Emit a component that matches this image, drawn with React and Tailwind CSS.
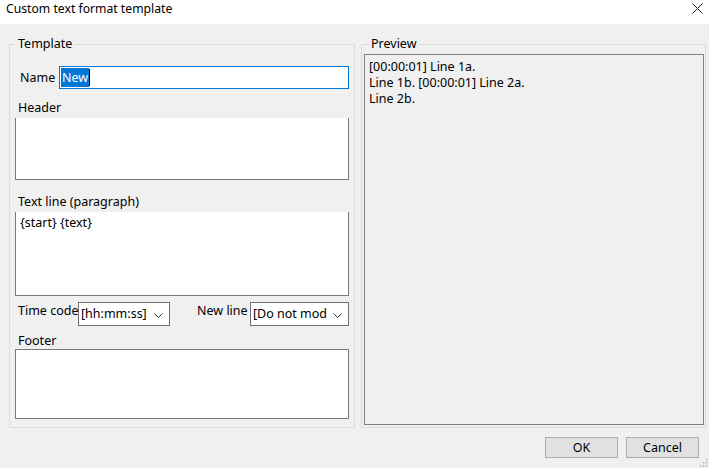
import React from 'react';

const font = { fontFamily: '"Noto Sans", "Liberation Sans", sans-serif' };

function Chevron() {
  return (
    <svg width="9" height="5" viewBox="0 0 9 5" className="shrink-0">
      <path d="M0.5 0.5 L4.5 4.5 L8.5 0.5" fill="none" stroke="#333" strokeWidth="1" />
    </svg>
  );
}

function Combo({ value, width }) {
  return (
    <div className={`flex h-[24px] items-start justify-between border border-[#707070] bg-white pl-[2px] pr-[6px] pt-[3px] ${width}`}>
      <span className="whitespace-nowrap leading-[16px]">{value}</span>
      <span className="mt-[7px]"><Chevron /></span>
    </div>
  );
}

function BoxLabel({ children }) {
  return (
    <div className="relative z-10 h-[18px] self-start bg-[#f0f0f0] pl-[3px] pr-[3px] leading-[16px]">{children}</div>
  );
}

export default function App() {
  return (
    <div className="relative flex h-[468px] w-[709px] flex-col overflow-hidden bg-[#f0f0f0] text-[12.5px] text-black" style={font}>
      <div className="flex h-[24px] shrink-0 items-start justify-between bg-white pl-[6px] pr-[6px]">
        <div className="pt-[1px] text-[12.2px] leading-[16px]">Custom text format template</div>
        <svg width="11" height="11" viewBox="0 0 11 11" className="mt-[3px]">
          <path d="M0.5 0.5 L10.5 10.5 M10.5 0.5 L0.5 10.5" stroke="#222" strokeWidth="1" />
        </svg>
      </div>

      <div className="flex gap-[6px] pl-[9px] pt-[12px]">
        <fieldset className="flex h-[392px] w-[346px] flex-col border border-[#dcdcdc] pl-[5px] pr-[5px]">
          <legend className="px-[3px] leading-[16px]">Template</legend>
          <div className="mt-[14px] flex h-[23px] shrink-0 items-center">
            <span className="w-[44px] pl-[5px] leading-[16px]">Name</span>
            <div className="flex h-[23px] flex-1 items-center border border-[#0078d7] bg-white pl-[1px]">
              <span className="bg-[#0078d7] px-[1px] leading-[19px] text-white">New</span>
              <span className="h-[17px] w-[1px] bg-black" />
            </div>
          </div>

          <div className="mt-[11px]"><BoxLabel>Header</BoxLabel></div>
          <div className="-mt-[2px] h-[64px] shrink-0 border border-[#7a7a7a] bg-white" />

          <div className="mt-[14px]"><BoxLabel>Text line (paragraph)</BoxLabel></div>
          <div className="-mt-[1px] h-[85px] shrink-0 border border-[#7a7a7a] bg-white pl-[4px] pt-[3px] leading-[16px]">{'{start} {text}'}</div>

          <div className="mt-[6px] flex shrink-0 items-start">
            <span className="w-[63px] whitespace-nowrap pl-[3px] pt-[1px] leading-[16px]">Time code</span>
            <Combo value="[hh:mm:ss]" width="w-[92px]" />
            <span className="ml-[27px] w-[53px] whitespace-nowrap pt-[1px] leading-[16px]">New line</span>
            <Combo value="[Do not mod" width="w-[99px]" />
          </div>

          <div className="mt-[7px] pl-[3px] leading-[16px]">Footer</div>
          <div className="h-[70px] shrink-0 border border-[#7a7a7a] bg-white" />
        </fieldset>

        <fieldset className="flex h-[392px] w-[345px] flex-col border border-[#dcdcdc] pl-[2px] pr-[1px]">
          <legend className="ml-[5px] px-[2px] leading-[16px]">Preview</legend>
          <div className="mt-[2px] h-[371px] border border-[#828282] bg-[#f0f0f0] pl-[4px] pt-[4px] leading-[16px]">
            <div>[00:00:01] Line 1a.</div>
            <div>Line 1b. [00:00:01] Line 2a.</div>
            <div>Line 2b.</div>
          </div>
        </fieldset>
      </div>

      <div className="mt-[9px] flex justify-end gap-[8px] pr-[10px]">
        <button className="h-[21px] w-[73px] border border-[#adadad] bg-[#e1e1e1] leading-[16px]">OK</button>
        <button className="h-[21px] w-[73px] border border-[#adadad] bg-[#e1e1e1] leading-[16px]">Cancel</button>
      </div>

      <svg width="8" height="8" viewBox="0 0 8 8" className="absolute bottom-[1px] right-[1px]">
        <rect x="6" y="0" width="1.5" height="1.5" fill="#b5b5b5" />
        <rect x="3" y="3" width="1.5" height="1.5" fill="#b5b5b5" />
        <rect x="6" y="3" width="1.5" height="1.5" fill="#b5b5b5" />
        <rect x="0" y="6" width="1.5" height="1.5" fill="#b5b5b5" />
        <rect x="3" y="6" width="1.5" height="1.5" fill="#b5b5b5" />
        <rect x="6" y="6" width="1.5" height="1.5" fill="#b5b5b5" />
      </svg>
    </div>
  );
}
